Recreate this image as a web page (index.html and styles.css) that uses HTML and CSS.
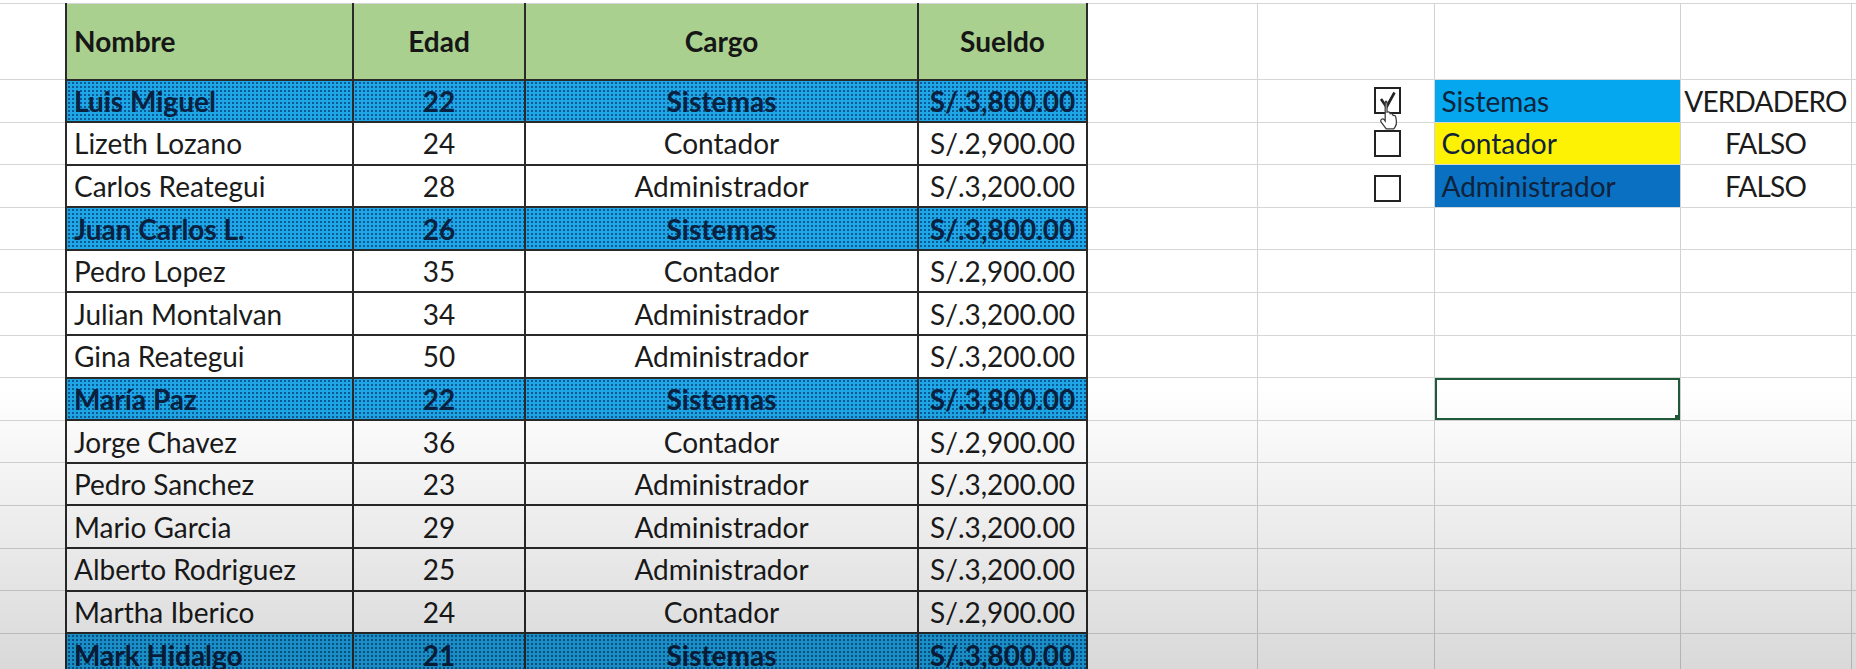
FILE: index.html
```html
<!DOCTYPE html>
<html lang="es">
<head>
  <meta charset="UTF-8">
  <title>Empleados - Casillas de verificación</title>
  <link rel="stylesheet" href="styles.css">
</head>
<body>

  <table class="sheet">
    <colgroup>
      <col class="w-gutter">
      <col class="w-nombre">
      <col class="w-edad">
      <col class="w-cargo">
      <col class="w-sueldo">
      <col class="w-f">
      <col class="w-g">
      <col class="w-h">
      <col class="w-i">
      <col>
    </colgroup>

    <tr class="head">
      <td></td>
      <td class="d">Nombre</td>
      <td class="d c">Edad</td>
      <td class="d c">Cargo</td>
      <td class="d c">Sueldo</td>
      <td class="g"></td><td class="g"></td><td class="g"></td><td class="g"></td><td></td>
    </tr>
    <tr class="hl">
      <td></td>
      <td class="d">Luis Miguel</td>
      <td class="d c">22</td>
      <td class="d c">Sistemas</td>
      <td class="d c">S/.3,800.00</td>
      <td class="g"></td>
      <td class="g chk">
        <span class="box">
          <svg viewBox="0 0 23 23" width="23" height="23"><path d="M5 10 L10.5 18 L18.5 3.5" fill="none" stroke="#222" stroke-width="2.6" stroke-linejoin="round"/></svg>
        </span>
        <svg class="cursor" viewBox="0 0 20 26" width="24" height="30">
          <path d="M6.5 1.2c1 0 1.8.8 1.8 1.8v7.6l.6-.2c.9-.2 1.8.3 2 1.2l.1.4.5-.1c.9-.2 1.8.3 2 1.2l.1.4.4-.1c.9-.1 1.7.5 1.9 1.4l.5 3.6c.3 2-.2 3.8-1.3 5.3l-1 1.4H7.6l-4.4-6c-.6-.8-.4-1.9.4-2.4.8-.5 1.7-.3 2.2.4l.9 1.2V3c0-1 .8-1.8 1.8-1.8z" fill="#fff" stroke="#3a3a3a" stroke-width="1.1"/>
        </svg>
      </td>
      <td class="g tag tag-sis">Sistemas</td>
      <td class="g c res">VERDADERO</td>
      <td></td>
    </tr>
    <tr>
      <td></td>
      <td class="d">Lizeth Lozano</td>
      <td class="d c">24</td>
      <td class="d c">Contador</td>
      <td class="d c">S/.2,900.00</td>
      <td class="g"></td>
      <td class="g chk"><span class="box"></span></td>
      <td class="g tag tag-con">Contador</td>
      <td class="g c res">FALSO</td>
      <td></td>
    </tr>
    <tr>
      <td></td>
      <td class="d">Carlos Reategui</td>
      <td class="d c">28</td>
      <td class="d c">Administrador</td>
      <td class="d c">S/.3,200.00</td>
      <td class="g"></td>
      <td class="g chk low"><span class="box"></span></td>
      <td class="g tag tag-adm">Administrador</td>
      <td class="g c res">FALSO</td>
      <td></td>
    </tr>
    <tr class="hl">
      <td></td>
      <td class="d">Juan Carlos L.</td>
      <td class="d c">26</td>
      <td class="d c">Sistemas</td>
      <td class="d c">S/.3,800.00</td>
      <td class="g"></td><td class="g"></td><td class="g"></td><td class="g"></td><td></td>
    </tr>
    <tr>
      <td></td>
      <td class="d">Pedro Lopez</td>
      <td class="d c">35</td>
      <td class="d c">Contador</td>
      <td class="d c">S/.2,900.00</td>
      <td class="g"></td><td class="g"></td><td class="g"></td><td class="g"></td><td></td>
    </tr>
    <tr>
      <td></td>
      <td class="d">Julian Montalvan</td>
      <td class="d c">34</td>
      <td class="d c">Administrador</td>
      <td class="d c">S/.3,200.00</td>
      <td class="g"></td><td class="g"></td><td class="g"></td><td class="g"></td><td></td>
    </tr>
    <tr>
      <td></td>
      <td class="d">Gina Reategui</td>
      <td class="d c">50</td>
      <td class="d c">Administrador</td>
      <td class="d c">S/.3,200.00</td>
      <td class="g"></td><td class="g"></td><td class="g"></td><td class="g"></td><td></td>
    </tr>
    <tr class="hl">
      <td></td>
      <td class="d">María Paz</td>
      <td class="d c">22</td>
      <td class="d c">Sistemas</td>
      <td class="d c">S/.3,800.00</td>
      <td class="g"></td><td class="g"></td><td class="g sel"></td><td class="g"></td><td></td>
    </tr>
    <tr>
      <td></td>
      <td class="d">Jorge Chavez</td>
      <td class="d c">36</td>
      <td class="d c">Contador</td>
      <td class="d c">S/.2,900.00</td>
      <td class="g"></td><td class="g"></td><td class="g"></td><td class="g"></td><td></td>
    </tr>
    <tr>
      <td></td>
      <td class="d">Pedro Sanchez</td>
      <td class="d c">23</td>
      <td class="d c">Administrador</td>
      <td class="d c">S/.3,200.00</td>
      <td class="g"></td><td class="g"></td><td class="g"></td><td class="g"></td><td></td>
    </tr>
    <tr>
      <td></td>
      <td class="d">Mario Garcia</td>
      <td class="d c">29</td>
      <td class="d c">Administrador</td>
      <td class="d c">S/.3,200.00</td>
      <td class="g"></td><td class="g"></td><td class="g"></td><td class="g"></td><td></td>
    </tr>
    <tr>
      <td></td>
      <td class="d">Alberto Rodriguez</td>
      <td class="d c">25</td>
      <td class="d c">Administrador</td>
      <td class="d c">S/.3,200.00</td>
      <td class="g"></td><td class="g"></td><td class="g"></td><td class="g"></td><td></td>
    </tr>
    <tr>
      <td></td>
      <td class="d">Martha Iberico</td>
      <td class="d c">24</td>
      <td class="d c">Contador</td>
      <td class="d c">S/.2,900.00</td>
      <td class="g"></td><td class="g"></td><td class="g"></td><td class="g"></td><td></td>
    </tr>
    <tr class="hl">
      <td></td>
      <td class="d">Mark Hidalgo</td>
      <td class="d c">21</td>
      <td class="d c">Sistemas</td>
      <td class="d c">S/.3,800.00</td>
      <td class="g"></td><td class="g"></td><td class="g"></td><td class="g"></td><td></td>
    </tr>
  </table>

</body>
</html>
```

FILE: styles.css
```css
body {
  margin: 0;
  background: #fff;
  font-family: Lato, "Liberation Sans", sans-serif;
  overflow: hidden;
}
/* video-ish darkening towards the bottom */
body::after {
  content: "";
  position: fixed;
  inset: 0;
  pointer-events: none;
  background: linear-gradient(to bottom, rgba(0,0,0,0) 0, rgba(0,0,0,0) 58%, rgba(0,0,0,0.15) 100%);
}

.sheet {
  border-collapse: collapse;
  table-layout: fixed;
  width: 1856px;
  margin-top: 3px;
  font-size: 28px;
  color: #1b1b1b;
}
.w-gutter { width: 66px; }
.w-nombre { width: 287px; }
.w-edad { width: 172px; }
.w-cargo { width: 393px; }
.w-sueldo { width: 169px; }
.w-f { width: 170px; }
.w-g { width: 177px; }
.w-h { width: 246px; }
.w-i { width: 171px; }

.sheet tr { height: 42.6px; }
.sheet tr.head { height: 76px; }
.sheet td {
  padding: 0 7px;
  border: 0;
  border-bottom: 1px solid #d6d6d6;
  white-space: nowrap;
  overflow: hidden;
}
.sheet tr.head td { border-top: 1px solid #d6d6d6; }
.sheet td.g { border-right: 1px solid #d2d2d2; }
.c { text-align: center; }
.sheet td.res {
  padding: 0;
  letter-spacing: -0.8px;
}

/* data table */
.sheet td.d { border: 2px solid #2a2a2a; }
.head td.d {
  background: #a9d08e;
  font-weight: 700;
  color: #161616;
}
.hl td.d {
  background-color: #1ea6e6;
  background-image: radial-gradient(rgba(0,40,95,0.6) 28%, transparent 48%);
  background-size: 4px 4px;
  font-weight: 700;
  color: #0b2140;
}

/* checkboxes */
.sheet td.chk {
  position: relative;
  text-align: right;
  padding-right: 33px;
  line-height: 0;
  overflow: visible;
}
.sheet td.chk.low { padding-top: 6px; }
.box {
  display: inline-block;
  width: 23px;
  height: 23px;
  border: 2px solid #222;
  background: #fff;
  vertical-align: middle;
}
.box svg { display: block; }
.cursor {
  position: absolute;
  left: 119px;
  top: 20px;
}

/* category labels */
.tag { color: #10233a; }
.tag-sis { background: #05a7ee; }
.tag-con { background: #fdf104; }
.tag-adm { background: #0a70c2; }

/* active cell */
.sel {
  position: relative;
  box-shadow: inset 0 0 0 2px #1f5a3a;
}
.sel::after {
  content: "";
  position: absolute;
  right: -1px;
  bottom: -1px;
  width: 6px;
  height: 6px;
  background: #1f5a3a;
}
```
